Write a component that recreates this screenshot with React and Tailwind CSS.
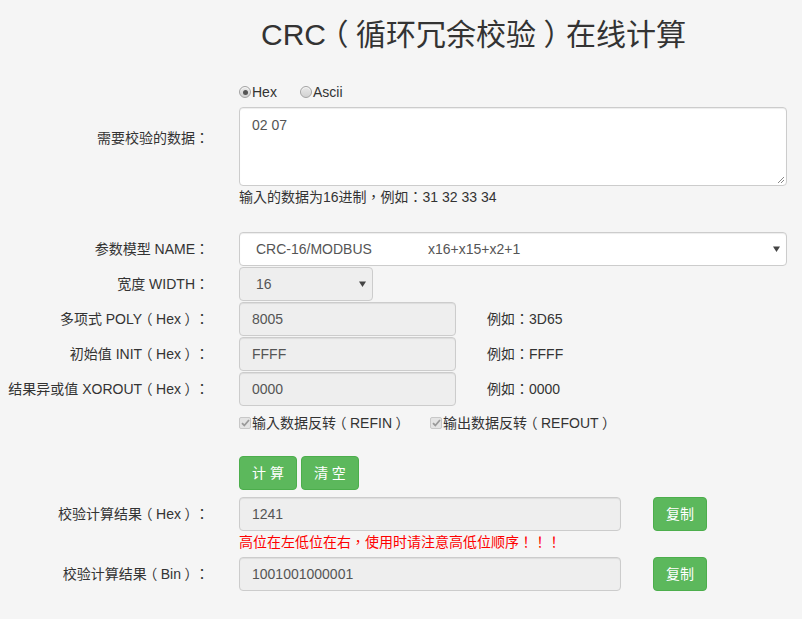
import React from 'react';

const font = 'font-["Liberation_Sans","Noto_Sans_CJK_TC",sans-serif]';

// full-width brackets sit centred in the reference font: half-width glyph + equal padding
function T({ children }) {
  const parts = String(children).split(/([（）])/);
  return parts.map((p, i) =>
    p === '（' || p === '）' ? (
      <span key={i} className="inline-block px-[0.25em] [font-feature-settings:'halt']">{p}</span>
    ) : (
      p
    )
  );
}

function Caret() {
  return (
    <svg width="7" height="6" viewBox="0 0 7 6" className="shrink-0">
      <path d="M0 0.5h7L3.5 6z" fill="#444" />
    </svg>
  );
}

function Radio({ checked, label }) {
  return (
    <span className="flex items-center">
      <span className="w-3 h-3 rounded-full border border-[#a3a3a3] bg-gradient-to-b from-[#e8e8e8] to-[#d2d2d2] flex items-center justify-center shadow-[inset_0_1px_1px_rgba(255,255,255,0.8)]">
        {checked && <span className="w-[5px] h-[5px] rounded-full bg-[#555]" />}
      </span>
      <span className="ml-[1px]">{label}</span>
    </span>
  );
}

function Check({ label }) {
  return (
    <span className="flex items-center">
      <span className="w-3 h-3 rounded-[2px] border border-[#c8c8c8] bg-[#e4e4e4] flex items-center justify-center">
        <svg width="9" height="8" viewBox="0 0 9 8">
          <path d="M1 4.2l2.3 2.3L8 1" stroke="#9a9a9a" strokeWidth="1.8" fill="none" />
        </svg>
      </span>
      <span className="ml-[1px]"><T>{label}</T></span>
    </span>
  );
}

function Row({ label, children, className = '' }) {
  return (
    <div className={`flex items-center ${className}`}>
      <label className="w-[224px] shrink-0 pr-[15px] text-right whitespace-nowrap"><T>{label}</T></label>
      <div className="flex-1 pl-[15px] pr-[15px] flex items-center">{children}</div>
    </div>
  );
}

function ReadOnly({ value, w }) {
  return (
    <div className={`${w} h-[34px] px-[12px] flex items-center rounded-[4px] border border-[#ccc] bg-[#eee] text-[#555] shadow-[inset_0_1px_1px_rgba(0,0,0,0.075)]`}>
      {value}
    </div>
  );
}

function GreenBtn({ children, className = '' }) {
  return (
    <button className={`h-[34px] px-[12px] rounded-[4px] border border-[#4cae4c] bg-[#5cb85c] text-white leading-5 ${className}`}>
      {children}
    </button>
  );
}

export default function App() {
  return (
    <div className={`min-h-screen bg-[#f5f5f5] text-[#333] text-[14px] leading-5 ${font}`}>
      {/* Title */}
      <h2 className="pt-[18px] pl-[261px] text-[30px] leading-[33px] font-normal whitespace-nowrap">
        <T>CRC（循环冗余校验）在线计算</T>
      </h2>

      <form className="mt-[30px]" onSubmit={(e) => e.preventDefault()}>
        {/* Data input */}
        <div className="flex">
          <label className="w-[224px] shrink-0 pr-[15px] pt-[47px] text-right">需要校验的数据：</label>
          <div className="flex-1 pl-[15px] pr-[15px]">
            <div className="flex h-5 items-center mt-[1px]">
              <span className="w-[61px]"><Radio checked label="Hex" /></span>
              <Radio label="Ascii" />
            </div>
            <div className="mt-[5px] h-[79px] rounded-[4px] border border-[#ccc] bg-white px-[12px] py-[7px] text-[#555] shadow-[inset_0_1px_1px_rgba(0,0,0,0.075)] relative">
              02 07
              <svg width="8" height="8" viewBox="0 0 8 8" className="absolute right-[1px] bottom-[1px]">
                <path d="M7 1L1 7M7 4L4 7" stroke="#888" strokeWidth="1" />
              </svg>
            </div>
            <p className="mt-[1px]">输入的数据为16进制，例如：31 32 33 34</p>
          </div>
        </div>

        {/* Parameters */}
        <Row label="参数模型 NAME：" className="mt-[25px]">
          <div className="w-full h-[34px] pl-[16px] pr-[6px] flex items-center justify-between rounded-[4px] border border-[#ccc] bg-white text-[#555] shadow-[inset_0_1px_1px_rgba(0,0,0,0.075)]">
            <span className="flex">
              <span className="w-[172px]">CRC-16/MODBUS</span>
              <span>x16+x15+x2+1</span>
            </span>
            <Caret />
          </div>
        </Row>
        <Row label="宽度 WIDTH：" className="mt-[1px]">
          <div className="w-[134px] h-[34px] pl-[16px] pr-[6px] flex items-center justify-between rounded-[4px] border border-[#ccc] bg-[#eee] text-[#555]">
            <span>16</span>
            <Caret />
          </div>
        </Row>
        <Row label="多项式 POLY（Hex）：" className="mt-[1px]">
          <ReadOnly value="8005" w="w-[217px]" />
          <span className="ml-[31px]">例如：3D65</span>
        </Row>
        <Row label="初始值 INIT（Hex）：" className="mt-[1px]">
          <ReadOnly value="FFFF" w="w-[217px]" />
          <span className="ml-[31px]">例如：FFFF</span>
        </Row>
        <Row label="结果异或值 XOROUT（Hex）：" className="mt-[1px]">
          <ReadOnly value="0000" w="w-[217px]" />
          <span className="ml-[31px]">例如：0000</span>
        </Row>

        {/* Reflect options */}
        <Row label="" className="mt-[7px] h-5">
          <span className="w-[191px]"><Check label="输入数据反转（REFIN）" /></span>
          <Check label="输出数据反转（REFOUT）" />
        </Row>

        {/* Actions */}
        <Row label="" className="mt-[23px]">
          <GreenBtn>计 算</GreenBtn>
          <GreenBtn className="ml-[4px]">清 空</GreenBtn>
        </Row>

        {/* Results */}
        <Row label="校验计算结果（Hex）：" className="mt-[7px]">
          <ReadOnly value="1241" w="w-[382px]" />
          <GreenBtn className="ml-[32px]">复制</GreenBtn>
        </Row>
        <div className="pl-[239px] mt-[1px] text-[#f00]">高位在左低位在右，使用时请注意高低位顺序！！！</div>
        <Row label="校验计算结果（Bin）：" className="mt-[5px]">
          <ReadOnly value="1001001000001" w="w-[382px]" />
          <GreenBtn className="ml-[32px]">复制</GreenBtn>
        </Row>
      </form>
    </div>
  );
}
